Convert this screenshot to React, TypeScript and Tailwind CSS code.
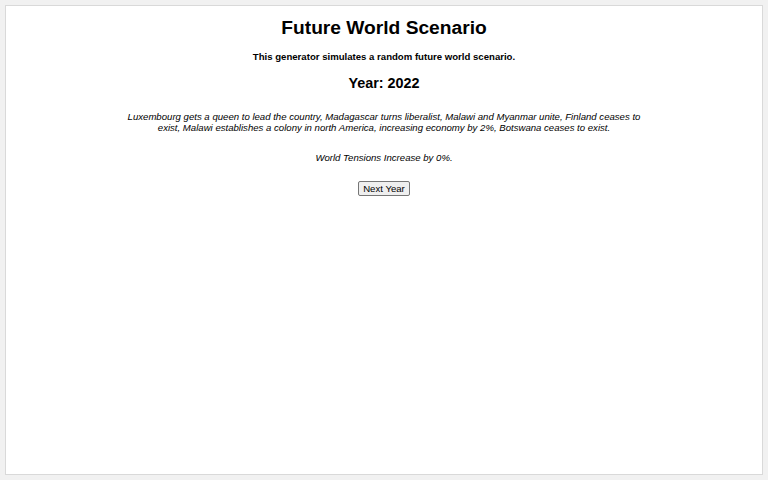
import React, { useState } from 'react';

const events = [
  'Luxembourg gets a queen to lead the country, Madagascar turns liberalist, Malawi and Myanmar unite, Finland ceases to exist, Malawi establishes a colony in north America, increasing economy by 2%, Botswana ceases to exist.',
];

export default function App() {
  const [year, setYear] = useState(2022);

  return (
    <div className="h-[480px] bg-[#f1f1f1] p-[5px] font-['Liberation_Sans',Arial,sans-serif] text-black">
      <div className="flex h-full flex-col items-center border border-[#d9d9d9] bg-white">
        <h1 className="mt-[10px] text-[19.2px] leading-[23px] font-bold">Future World Scenario</h1>
        <p className="mt-[12px] text-[9.6px] leading-[12px] font-bold">
          This generator simulates a random future world scenario.
        </p>
        <h2 className="mt-[12px] text-[14.4px] leading-[17px] font-bold">Year: {year}</h2>
        <p className="mt-[19px] w-[516px] text-center text-[9.6px] leading-[11px] italic">
          {events[0]}
        </p>
        <p className="mt-[19px] text-[9.6px] leading-[11px] italic">World Tensions Increase by 0%.</p>
        <button
          onClick={() => setYear(year + 1)}
          className="mt-[18px] h-[15px] rounded-[2px] border border-[#767676] bg-[#efefef] px-[4px] text-[9.6px] leading-[13px]"
        >
          Next Year
        </button>
      </div>
    </div>
  );
}
